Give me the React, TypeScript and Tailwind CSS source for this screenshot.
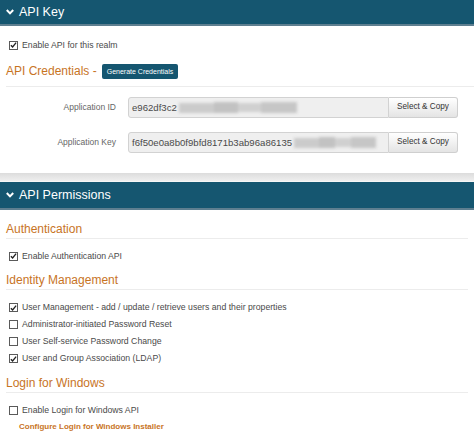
import React from "react";

const Chevron = () => (
  <svg width="8" height="6" viewBox="0 0 8 6" className="shrink-0">
    <path d="M0.8 1 L4 4.4 L7.2 1" fill="none" stroke="#ffffff" strokeWidth="2" />
  </svg>
);

const Check = ({ checked }: { checked: boolean }) => (
  <span className="w-[9px] h-[9px] border border-[#5a5a5a] bg-white flex items-center justify-center shrink-0">
    {checked && (
      <svg width="8" height="8" viewBox="0 0 8 8">
        <path d="M1 4.2 L3 6.3 L7 1.2" fill="none" stroke="#222" strokeWidth="1.5" />
      </svg>
    )}
  </span>
);

const Header = ({ title, h }: { title: string; h: string }) => (
  <div className={`${h} bg-[#155670] border-b-2 border-[#5e7f90] flex items-center pl-[6px] gap-[5px] shrink-0`}>
    <Chevron />
    <span className="text-white text-[12.5px] leading-none">{title}</span>
  </div>
);

const CheckRow = ({ checked, label, h, mt }: { checked: boolean; label: string; h: string; mt: string }) => (
  <div className={`${h} ${mt} flex items-center pl-[9px] gap-[4px] shrink-0`}>
    <Check checked={checked} />
    <span className="text-[8.7px] text-[#4a4a4a] leading-none">{label}</span>
  </div>
);

const Section = ({ title, mt }: { title: string; mt: string }) => (
  <div className={`${mt} shrink-0`}>
    <div className="h-[16px] flex items-center pl-[6px] text-[12px] text-[#c8741f] leading-none">{title}</div>
    <div className="mt-[1px] ml-[6px] mr-[6px] border-t border-[#ececec]" />
  </div>
);

const CredRow = ({ label, value, blur, mt }: { label: string; value: string; blur: string; mt: string }) => (
  <div className={`${mt} h-[21px] flex items-stretch shrink-0`}>
    <div className="w-[116px] flex items-center justify-end text-[8.5px] text-[#666] leading-none">{label}</div>
    <div className="ml-[12px] w-[261px] bg-[#efefef] border border-[#d2d2d2] rounded-l-[3px] flex items-center pl-[3px] overflow-hidden">
      <span className="text-[9.6px] text-[#4a4a4a] leading-none whitespace-nowrap">{value}</span>
      <span className={`${blur} h-[11px] ml-[2px] shrink-0 flex items-center blur-[1.5px]`}>
        <span className="h-[10px] flex-[3] bg-[#cbcbcb]" />
        <span className="h-[11px] flex-[2] bg-[#c2c2c2]" />
        <span className="h-[9px] flex-[2] bg-[#d0d0d0]" />
        <span className="h-[11px] flex-[3] bg-[#c6c6c6]" />
      </span>
    </div>
    <div className="w-[69px] border border-l-0 border-[#cfcfcf] rounded-r-[3px] bg-gradient-to-b from-white to-[#e4e4e4] flex items-center justify-center text-[8.2px] text-[#333] leading-none">
      Select &amp; Copy
    </div>
  </div>
);

export default function App() {
  return (
    <div className="w-[474px] h-[444px] overflow-hidden bg-white flex flex-col" style={{ fontFamily: '"Liberation Sans", Arial, sans-serif' }}>
      <Header title="API Key" h="h-[26px]" />
      <CheckRow checked label="Enable API for this realm" h="h-[14px]" mt="mt-[12px]" />
      <div className="mt-[10px] h-[18px] flex items-center pl-[6px] gap-[5px] shrink-0">
        <span className="text-[12px] text-[#c8741f] leading-none">API Credentials -</span>
        <span className="h-[15px] px-[5px] bg-[#155670] rounded-[2px] flex items-center text-white text-[7px] leading-none">Generate Credentials</span>
      </div>
      <div className="mt-[6px] ml-[6px] border-t border-[#ececec] shrink-0" />
      <CredRow label="Application ID" value="e962df3c2" blur="w-[118px]" mt="mt-[10px]" />
      <CredRow label="Application Key" value="f6f50e0a8b0f9bfd8171b3ab96a86135" blur="w-[82px]" mt="mt-[14px]" />
      <div className="mt-[20px] h-[8px] bg-gradient-to-b from-[#dcdcdc] to-[#efefef] shrink-0" />
      <div className="h-[1px] bg-[#f6f6f6] shrink-0" />
      <Header title="API Permissions" h="h-[28px]" />
      <Section title="Authentication" mt="mt-[11px]" />
      <CheckRow checked label="Enable Authentication API" h="h-[14px]" mt="mt-[10px]" />
      <Section title="Identity Management" mt="mt-[9px]" />
      <CheckRow checked label="User Management - add / update / retrieve users and their properties" h="h-[17px]" mt="mt-[9px]" />
      <CheckRow checked={false} label="Administrator-initiated Password Reset" h="h-[17px]" mt="mt-0" />
      <CheckRow checked={false} label="User Self-service Password Change" h="h-[17px]" mt="mt-0" />
      <CheckRow checked label="User and Group Association (LDAP)" h="h-[17px]" mt="mt-0" />
      <Section title="Login for Windows" mt="mt-[8px]" />
      <CheckRow checked={false} label="Enable Login for Windows API" h="h-[14px]" mt="mt-[10px]" />
      <div className="mt-[3px] h-[14px] flex items-center pl-[19px] text-[8px] font-bold text-[#c8741f] leading-none shrink-0">
        Configure Login for Windows Installer
      </div>
    </div>
  );
}
